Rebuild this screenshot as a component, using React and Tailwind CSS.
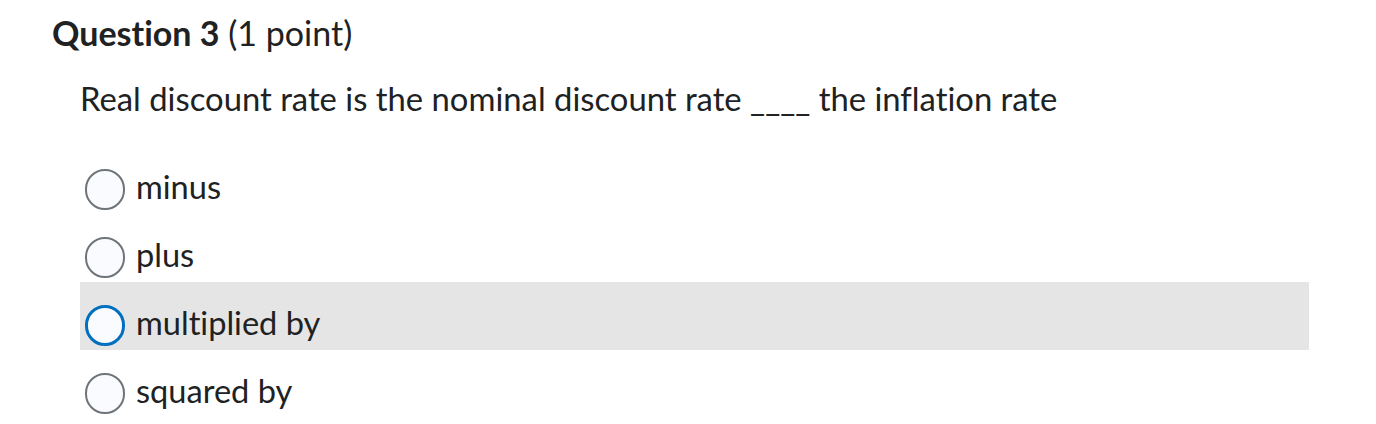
const options = ['minus', 'plus', 'multiplied by', 'squared by'];

const Radio = ({ focused }) => (
  <span
    className={`block w-[40px] h-[41px] rounded-full bg-[#f9fbff] shrink-0 ${
      focused ? 'border-[3px] border-[#006fbf]' : 'border-[2.5px] border-[#6e7477]'
    }`}
  />
);

export default function App() {
  return (
    <div className="w-[1376px] h-[424px] bg-white text-[#202122] font-['Lato','Liberation_Sans',sans-serif] [font-variant-ligatures:none] pt-[12px]">
      <h2 className="pl-[52px] text-[34px] leading-[42px]">
        <span className="font-bold">Question 3</span> <span>(1 point)</span>
      </h2>
      <div className="pl-[80px] pr-[67px]">
        <p className="mt-[27px] text-[32.8px] leading-[36px]">
          Real discount rate is the nominal discount rate ____ the inflation rate
        </p>
        <div className="mt-[29px] flex flex-col">
          {options.map((opt, i) => (
            <label
              key={opt}
              className={`flex items-end h-[68px] pl-[5px] pb-[4px] ${i === 2 ? 'bg-[#e5e5e5]' : ''}`}
            >
              <div className="flex items-center gap-[11px] h-[41px]">
                <Radio focused={i === 2} />
                <span className="text-[32.6px] leading-[36px] pb-[5px]">{opt}</span>
              </div>
            </label>
          ))}
        </div>
      </div>
    </div>
  );
}
